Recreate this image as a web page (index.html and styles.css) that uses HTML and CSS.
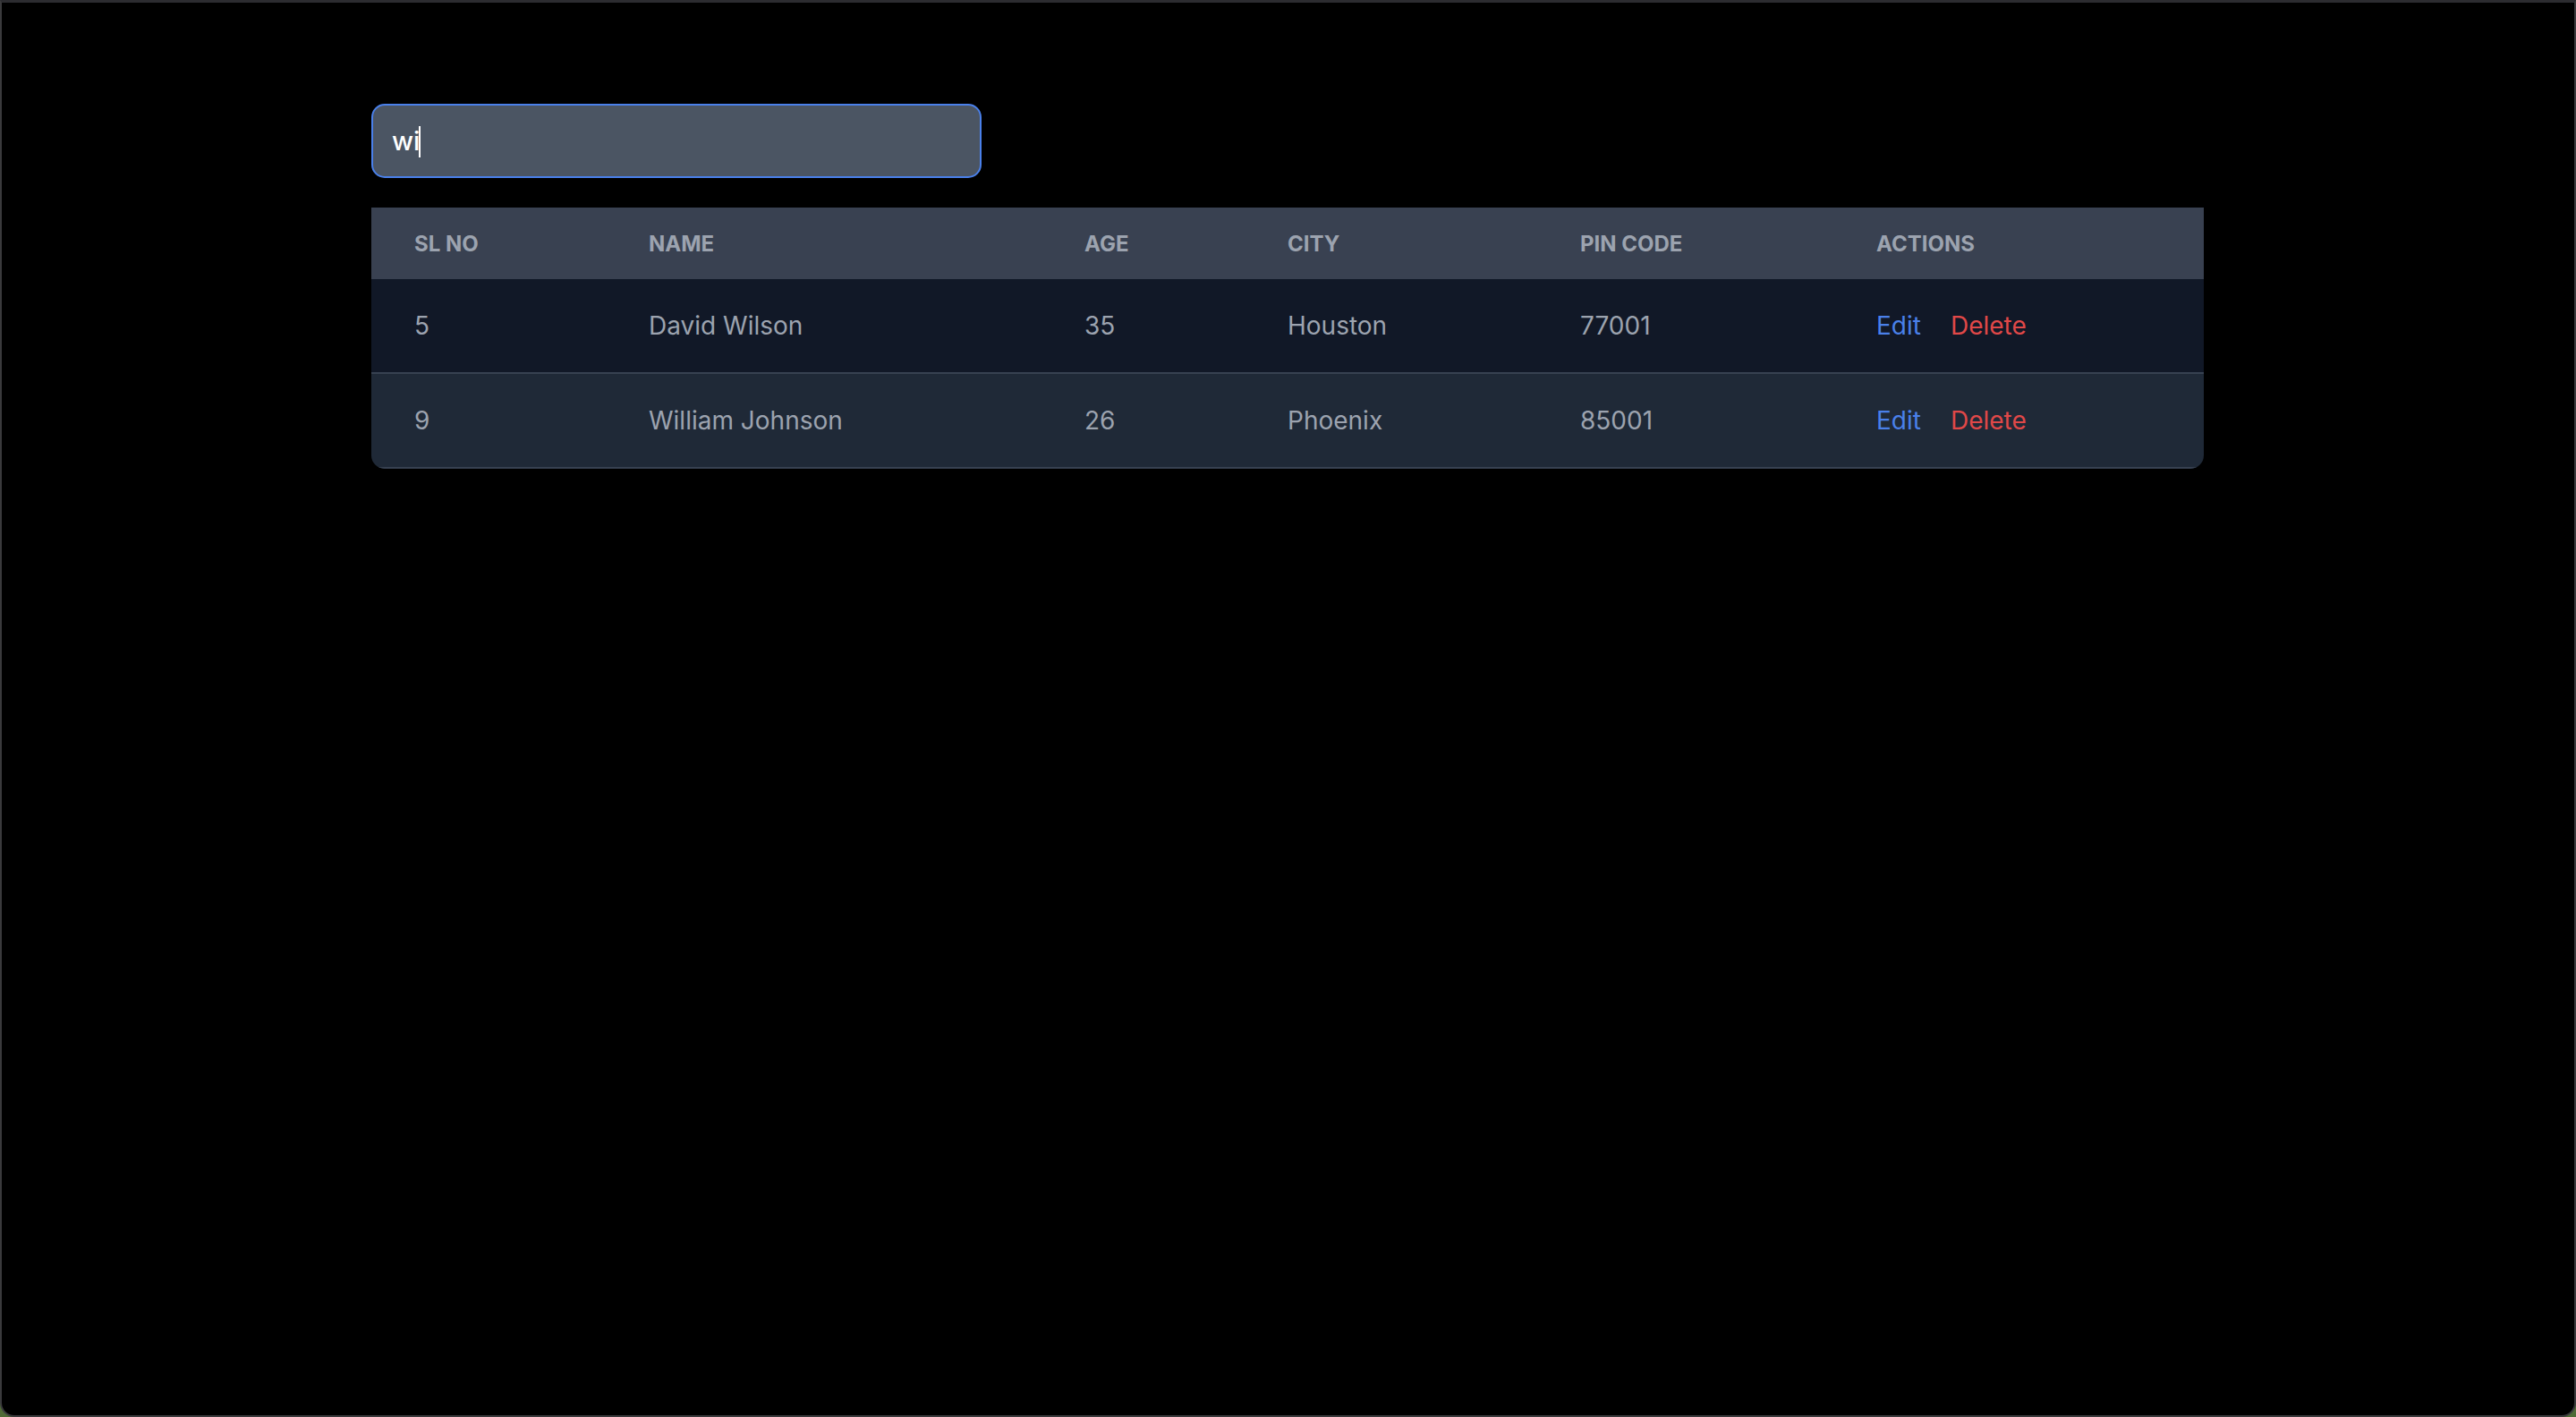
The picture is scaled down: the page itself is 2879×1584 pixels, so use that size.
FILE: index.html
```html
<!DOCTYPE html>
<html lang="en">
<head>
    <meta charset="UTF-8" />
    <meta name="viewport" content="width=device-width, initial-scale=1.0">
    <title>Users</title>
    <link rel="stylesheet" href="styles.css">
</head>
<body>
<div class="window">
    <div class="container">
        <div class="search-box">
            <input class="search" type="text" value="wi" autofocus>
            <span class="caret"></span>
        </div>
        <table class="users">
            <colgroup>
                <col class="c-sl">
                <col class="c-name">
                <col class="c-age">
                <col class="c-city">
                <col class="c-pin">
                <col class="c-actions">
            </colgroup>
            <thead>
                <tr>
                    <th>SL No</th>
                    <th>Name</th>
                    <th>Age</th>
                    <th>City</th>
                    <th>Pin Code</th>
                    <th>Actions</th>
                </tr>
            </thead>
            <tbody>
                <tr>
                    <td>5</td>
                    <td>David Wilson</td>
                    <td>35</td>
                    <td>Houston</td>
                    <td>77001</td>
                    <td><a class="edit" href="#">Edit</a><a class="delete" href="#">Delete</a></td>
                </tr>
                <tr>
                    <td>9</td>
                    <td>William Johnson</td>
                    <td>26</td>
                    <td>Phoenix</td>
                    <td>85001</td>
                    <td><a class="edit" href="#">Edit</a><a class="delete" href="#">Delete</a></td>
                </tr>
            </tbody>
        </table>
    </div>
</div>
</body>
</html>
```

FILE: styles.css
```css
* {
    box-sizing: border-box;
    margin: 0;
    padding: 0;
}
html, body {
    background: #4f6a36;
    font-family: Inter, "Noto Sans", sans-serif;
}
.window {
    height: 1584px;
    background: #000;
    border: 2px solid #3a3a3c;
    border-top: 3px solid #2c2c30;
    border-radius: 0 0 16px 16px;
}
.container {
    padding: 113px 0 0 413px;
}
.search-box {
    position: relative;
    width: 682px;
}
.search {
    display: block;
    width: 682px;
    height: 83px;
    padding: 0 21px;
    background: #4b5563;
    border: 2px solid #4a80ea;
    border-radius: 15px;
    color: #fff;
    font-family: inherit;
    font-size: 29px;
    font-weight: 500;
    caret-color: transparent;
    outline: none;
}
/* focused caret, drawn so it shows in a still picture */
.caret {
    position: absolute;
    left: 53px;
    top: 25px;
    width: 2px;
    height: 35px;
    background: #fff;
}
.users {
    margin-top: 33px;
    width: 2048px;
    border-collapse: separate;
    border-spacing: 0;
    table-layout: fixed;
    border-radius: 0 0 15px 15px;
    overflow: hidden;
}
.c-sl { width: 262px; }
.c-name { width: 487px; }
.c-age { width: 227px; }
.c-city { width: 327px; }
.c-pin { width: 331px; }
.c-actions { width: 414px; }

.users th {
    height: 80px;
    padding: 0 0 0 48px;
    background: #394151;
    color: #9ca3af;
    font-size: 24px;
    font-weight: 700;
    text-align: left;
    text-transform: uppercase;
}
.users td {
    height: 106px;
    padding: 0 0 0 48px;
    color: #9ca3af;
    font-size: 28px;
    border-bottom: 2px solid #374151;
}
.users tbody tr:nth-child(odd) td {
    background: #111827;
}
.users tbody tr:nth-child(even) td {
    background: #1f2937;
}
.users a {
    text-decoration: none;
}
.users .edit {
    color: #4a80ea;
    margin-right: 33px;
}
.users .delete {
    color: #e04848;
}
```
